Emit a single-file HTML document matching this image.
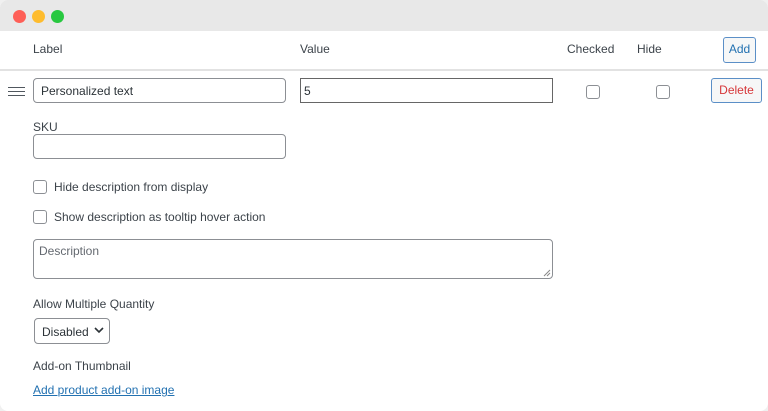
<!DOCTYPE html><html><head><style>
*{box-sizing:border-box;margin:0;padding:0}
body{width:768px;height:411px;background:#f0f0f0;font-family:"Liberation Sans",sans-serif;font-size:12px;color:#3c434a;position:relative;overflow:hidden}
.win{position:absolute;left:0;top:0;width:768px;height:411px;background:#fff;border-radius:8px;overflow:hidden}
.bar{position:absolute;left:0;top:0;width:768px;height:31px;background:#e8e8e8}
.dot{position:absolute;top:10px;width:13px;height:13px;border-radius:50%}
.a{position:absolute;white-space:nowrap}
.in{position:absolute;border:1px solid #8c8f94;border-radius:4px;background:#fff}
.cb{position:absolute;width:14px;height:14px;border:1px solid #8c8f94;border-radius:3px;background:#fff}
.btn{position:absolute;border:1px solid #5b8fc7;border-radius:3px;background:#f6f7f7;text-align:center;line-height:23px}
</style></head><body><div class="win">
<div class="bar"></div>
<div class="dot" style="left:13px;background:#fe5f57"></div>
<div class="dot" style="left:32px;background:#febc2e"></div>
<div class="dot" style="left:51px;background:#28c840"></div>
<div class="a" style="left:33px;top:42px">Label</div>
<div class="a" style="left:300px;top:42px">Value</div>
<div class="a" style="left:567px;top:42px">Checked</div>
<div class="a" style="left:637px;top:42px">Hide</div>
<div class="btn" style="left:723px;top:37px;width:33px;height:26px;color:#2271b1">Add</div>
<div style="position:absolute;left:0;top:69px;width:768px;height:2px;background:#e2e2e2"></div>
<div style="position:absolute;left:8px;top:87px;width:17px;height:1px;background:#50575e;box-shadow:0 4px 0 #50575e,0 8px 0 #50575e"></div>
<div class="in" style="left:33px;top:78px;width:253px;height:25px"></div>
<div class="a" style="left:41px;top:84px;color:#2c3338">Personalized text</div>
<div class="in" style="left:300px;top:78px;width:253px;height:25px;border-radius:0;border-color:#666"></div>
<div class="a" style="left:304px;top:84px;color:#2c3338">5</div>
<div class="cb" style="left:586px;top:85px"></div>
<div class="cb" style="left:656px;top:85px"></div>
<div class="btn" style="left:711px;top:78px;width:51px;height:25px;color:#d63638">Delete</div>
<div class="a" style="left:33px;top:120px">SKU</div>
<div class="in" style="left:33px;top:134px;width:253px;height:25px"></div>
<div class="cb" style="left:33px;top:180px"></div>
<div class="a" style="left:54px;top:180px">Hide description from display</div>
<div class="cb" style="left:33px;top:210px"></div>
<div class="a" style="left:54px;top:210px">Show description as tooltip hover action</div>
<div class="in" style="left:33px;top:239px;width:520px;height:40px"></div>
<svg class="a" style="left:543px;top:269px" width="8" height="8"><path d="M7 1L1 7M7 4L4 7" stroke="#888" stroke-width="1"/></svg>
<div class="a" style="left:39px;top:244px;color:#646970">Description</div>
<div class="a" style="left:33px;top:297px">Allow Multiple Quantity</div>
<div class="in" style="left:34px;top:318px;width:76px;height:26px"></div>
<div class="a" style="left:42px;top:325px;color:#2c3338">Disabled</div>
<svg class="a" style="left:94px;top:327px" width="10" height="7"><path d="M1 1l4 4 4-4" stroke="#2c3338" stroke-width="1.6" fill="none"/></svg>
<div class="a" style="left:33px;top:359px">Add-on Thumbnail</div>
<div class="a" style="left:33px;top:383px;color:#2271b1;text-decoration:underline">Add product add-on image</div>
</div></body></html>
